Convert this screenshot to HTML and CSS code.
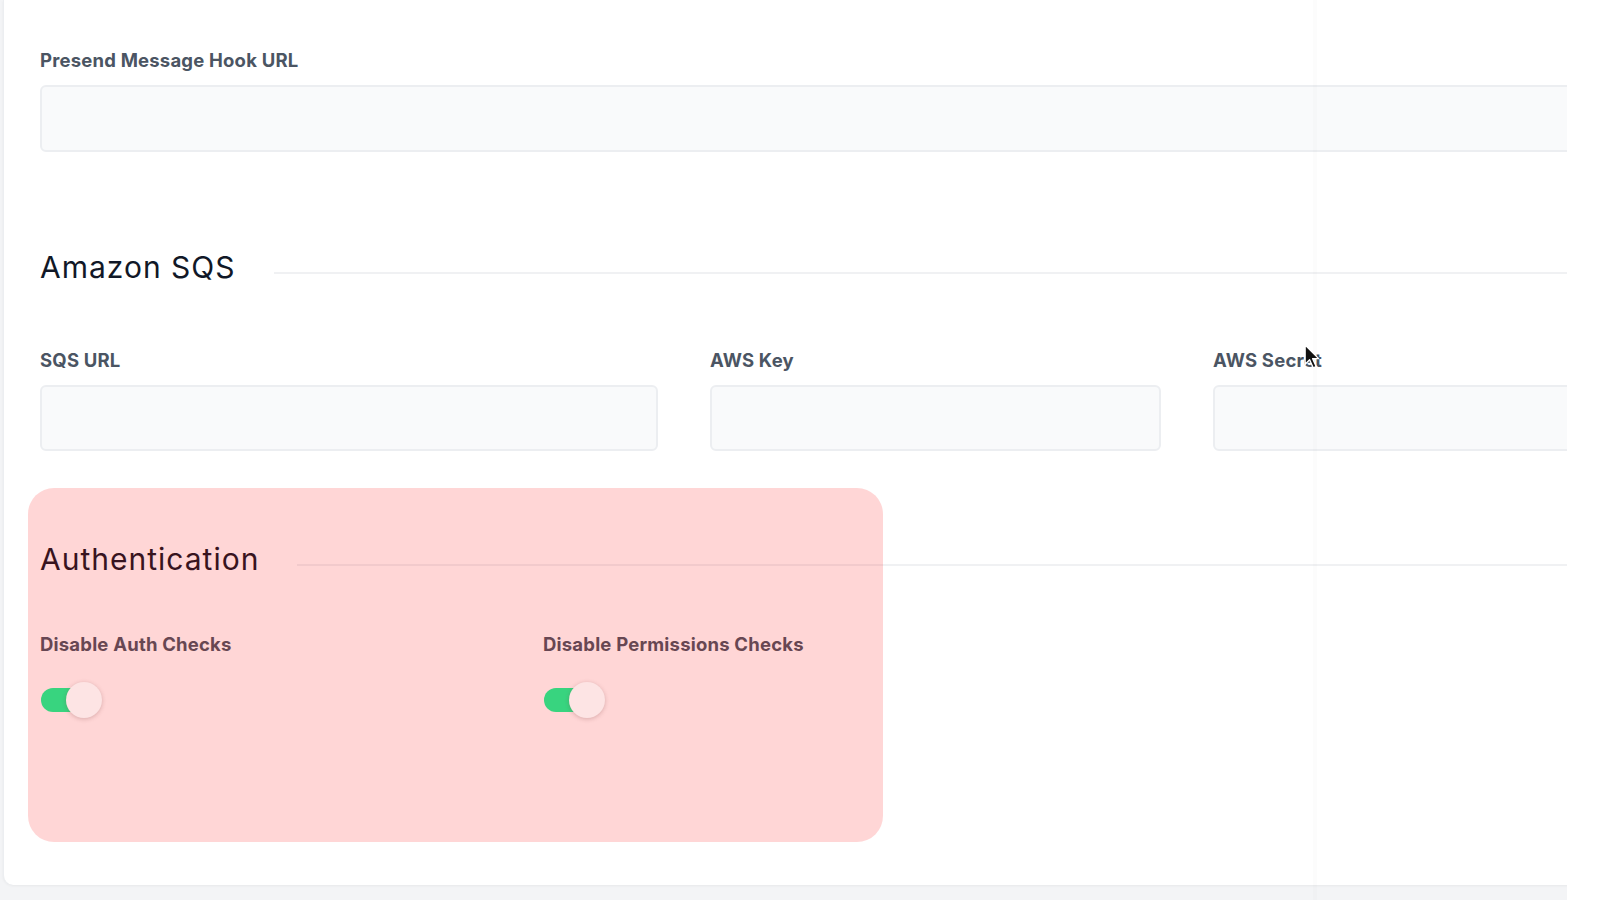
FILE: index.html
```html
<!DOCTYPE html>
<html lang="en">
<head>
<meta charset="utf-8">
<title>Settings</title>
<link rel="stylesheet" href="styles.css">
</head>
<body>
<div class="shell">
  <div class="viewport">
    <div class="card">
      <div class="field">
        <label class="label">Presend Message Hook URL</label>
        <div class="input input-wide"></div>
      </div>

      <div class="section-head sqs">
        <h2 class="section-title">Amazon SQS</h2>
        <div class="section-line"></div>
      </div>

      <div class="grid-sqs">
        <div class="field">
          <label class="label">SQS URL</label>
          <div class="input input-row"></div>
        </div>
        <div class="field">
          <label class="label">AWS Key</label>
          <div class="input input-row"></div>
        </div>
        <div class="field">
          <label class="label">AWS Secret</label>
          <div class="input input-row"></div>
        </div>
      </div>

      <div class="section-head auth">
        <h2 class="section-title">Authentication</h2>
        <div class="section-line"></div>
      </div>

      <div class="grid-auth">
        <div class="field">
          <label class="label">Disable Auth Checks</label>
          <div class="toggle"><span class="track"></span><span class="knob"></span></div>
        </div>
        <div class="field">
          <label class="label">Disable Permissions Checks</label>
          <div class="toggle"><span class="track"></span><span class="knob"></span></div>
        </div>
      </div>

      <div class="highlight"></div>
    </div>
  </div>
  <div class="edge"></div>
</div>
<div class="vline"></div>
<svg class="cursor" width="18" height="27" viewBox="0 0 16 24" aria-hidden="true">
  <path d="M1 1 L1 18 L5 14 L8.2 21.2 L10.8 20 L7.7 13 L13 13 Z" fill="#111" stroke="#fff" stroke-width="1.2" stroke-linejoin="round"/>
</svg>
</body>
</html>
```

FILE: styles.css
```css
html, body {
  margin: 0;
  padding: 0;
}

body {
  width: 1600px;
  height: 900px;
  overflow: hidden;
  background: #ffffff;
  font-family: Inter, "Noto Sans", "Liberation Sans", sans-serif;
  position: relative;
}

.shell {
  display: flex;
  height: 900px;
}

.viewport {
  width: 1567px;
  height: 900px;
  background: #f3f4f6;
  overflow: hidden;
  flex: none;
}

.edge {
  flex: 1;
  background: #ffffff;
}

.card {
  position: relative;
  margin-left: 3px;
  width: 1720px;
  height: 885px;
  box-sizing: border-box;
  background: #ffffff;
  border-left: 1px solid #eceef1;
  border-bottom-left-radius: 10px;
  box-shadow: 0 1px 3px rgba(0, 0, 0, 0.05);
  padding: 49px 0 0 36px;
}

.field {
  display: flex;
  flex-direction: column;
  align-items: flex-start;
}

.label {
  display: block;
  font-size: 18.5px;
  line-height: 22px;
  font-weight: 700;
  color: #4b5563;
  letter-spacing: 0.2px;
  white-space: nowrap;
}

.input {
  box-sizing: border-box;
  background: #f9fafb;
  border: 2px solid #eceef1;
  border-radius: 6px;
  margin-top: 14px;
}

.input-wide {
  width: 1640px;
  height: 67px;
}

.input-row {
  width: 100%;
  height: 66px;
}

.section-head {
  display: flex;
  align-items: flex-start;
}

.section-head.sqs {
  margin-top: 97px;
}

.section-head.auth {
  margin-top: 90px;
}

.section-title {
  margin: 0;
  font-size: 30px;
  line-height: 36px;
  font-weight: 400;
  color: #111827;
  letter-spacing: 1px;
}

.section-line {
  flex: 1;
  height: 2px;
  background: #f0f1f3;
  margin-left: 38px;
  margin-top: 23px;
}

.grid-sqs {
  display: grid;
  grid-template-columns: 618px 451px 451px;
  column-gap: 52px;
  margin-top: 64px;
}

.grid-auth {
  display: grid;
  grid-template-columns: 451px 451px;
  column-gap: 52px;
  margin-top: 56px;
}

.toggle {
  position: relative;
  z-index: 2;
  width: 64px;
  height: 36px;
  margin-top: 27px;
}

.track {
  position: absolute;
  left: 1px;
  top: 6px;
  width: 56px;
  height: 24px;
  border-radius: 12px;
  background: #38d47f;
}

.knob {
  position: absolute;
  left: 26px;
  top: 0;
  width: 36px;
  height: 36px;
  border-radius: 50%;
  background: #fde4e4;
  box-shadow: 0 1px 4px rgba(120, 60, 60, 0.28);
}

.highlight {
  position: absolute;
  left: 24px;
  top: 488px;
  width: 855px;
  height: 354px;
  border-radius: 26px;
  background: rgba(255, 0, 0, 0.16);
  z-index: 1;
  pointer-events: none;
}

.vline {
  position: absolute;
  left: 1313px;
  top: 0;
  width: 4px;
  height: 900px;
  background: rgba(0, 0, 0, 0.012);
  pointer-events: none;
}

.cursor {
  position: absolute;
  left: 1304px;
  top: 344px;
  pointer-events: none;
}
```
